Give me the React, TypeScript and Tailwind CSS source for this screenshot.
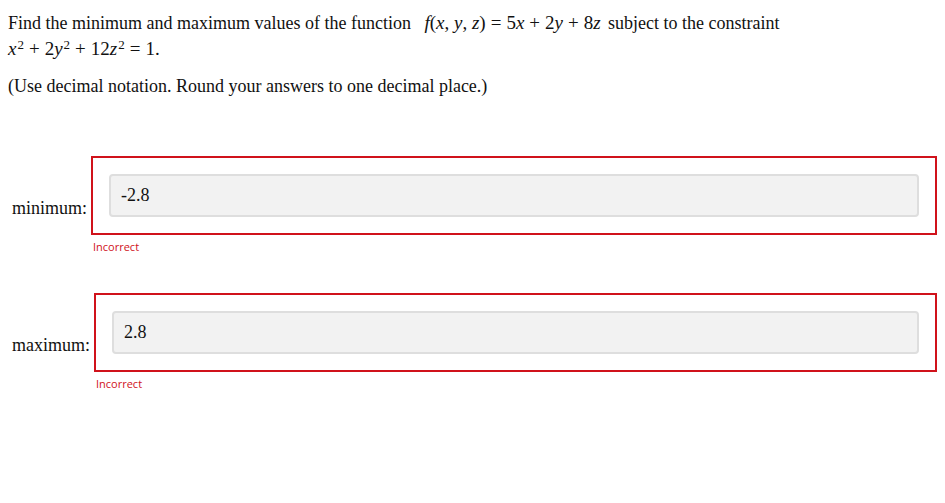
import React from "react";

const I = ({ children }: { children: React.ReactNode }) => <span className="italic">{children}</span>;
const Op = ({ children }: { children: React.ReactNode }) => <span className="inline-block mx-[5px]">{children}</span>;
const Sup = () => <sup className="ml-[1px] text-[13px]">2</sup>;

function AnswerRow({ label, value, labelW }: { label: string; value: string; labelW: string }) {
  return (
    <div className="flex items-start">
      <div className={`${labelW} shrink-0 mt-[40px] pl-[12px] text-[18px] leading-[24px] text-[#111]`}>{label}</div>
      <div className="flex-1 flex flex-col">
        <div className="border-2 border-[#d0121b] p-4">
          <div className="h-[43px] rounded-[4px] border-2 border-[#dedede] bg-[#f2f2f2] flex items-center px-[10px] text-[18px] text-[#111]">
            {value}
          </div>
        </div>
        <div className="mt-[5px] pl-[2px] text-[11px] leading-[14px] text-[#d0121b] font-['Open_Sans',sans-serif]">Incorrect</div>
      </div>
    </div>
  );
}

export default function App() {
  return (
    <div className="w-[945px] h-[503px] bg-white font-['Liberation_Serif',serif] text-[#111] pr-[8px]">
      <div className="pl-[8px] pt-[10px] text-[18px] leading-[26px]">
        <div>
          Find the minimum and maximum values of the function{" "}
          <span className="ml-[9px] mr-[3px] text-[19px]">
            <I>f</I>(<I>x</I>, <I>y</I>, <I>z</I>)<Op>=</Op>5<I>x</I><Op>+</Op>2<I>y</I><Op>+</Op>8<I>z</I>
          </span>{" "}
          subject to the constraint
        </div>
        <div className="text-[19px]">
          <I>x</I><Sup /><Op>+</Op>2<I>y</I><Sup /><Op>+</Op>12<I>z</I><Sup /><Op>=</Op>1.
        </div>
        <div className="mt-[11px]">(Use decimal notation. Round your answers to one decimal place.)</div>
      </div>
      <div className="mt-[57px]">
        <AnswerRow label="minimum:" value="-2.8" labelW="w-[91px]" />
      </div>
      <div className="mt-[39px]">
        <AnswerRow label="maximum:" value="2.8" labelW="w-[94px]" />
      </div>
    </div>
  );
}
